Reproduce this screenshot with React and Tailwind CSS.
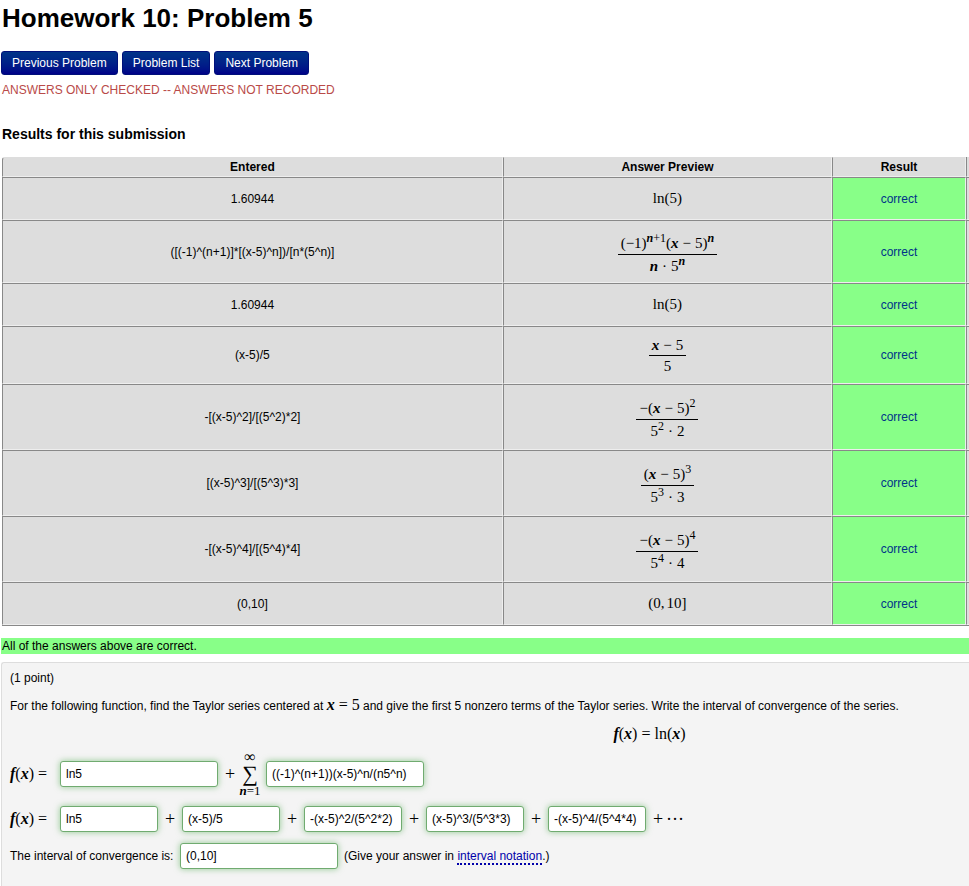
import React, { useState } from 'react';

const Tex = ({ children, className = 'text-[15px]' }) => (
  <span className={`font-['Liberation_Serif',serif] whitespace-nowrap ${className}`}>{children}</span>
);

const V = ({ children }) => <i className="font-semibold">{children}</i>;

// binary operator with the usual math spacing on both sides
const Op = ({ children }) => <span className="mx-1">{children}</span>;

const Sup = ({ children, className = '' }) => (
  <sup className={`-top-1.5 text-[12px] ${className}`}>{children}</sup>
);

const Frac = ({ num, den, className = '' }) => (
  <Tex className={`inline-flex flex-col items-center align-middle text-[15px] ${className}`}>
    <span className="border-b border-black px-[3px]">{num}</span>
    <span>{den}</span>
  </Tex>
);

const XMinus5 = () => (
  <>
    (<V>x</V>
    <Op>−</Op>5)
  </>
);

const results = [
  { entered: '1.60944', preview: <Tex>ln(5)</Tex>, height: 'h-[43px]' },
  {
    entered: '([(-1)^(n+1)]*[(x-5)^n])/[n*(5^n)]',
    preview: (
      <Frac
        className="leading-[22px] pt-1.5"
        num={
          <>
            (−1)
            <Sup>
              <V>n</V>+1
            </Sup>
            <XMinus5 />
            <Sup>
              <V>n</V>
            </Sup>
          </>
        }
        den={
          <>
            <V>n</V>
            <Op>·</Op>5
            <Sup>
              <V>n</V>
            </Sup>
          </>
        }
      />
    ),
    height: 'h-[63px]',
  },
  { entered: '1.60944', preview: <Tex>ln(5)</Tex>, height: 'h-[43px]' },
  {
    entered: '(x-5)/5',
    preview: (
      <Frac
        className="leading-5"
        num={
          <>
            <V>x</V>
            <Op>−</Op>5
          </>
        }
        den="5"
      />
    ),
    height: 'h-[58px]',
  },
  {
    entered: '-[(x-5)^2]/[(5^2)*2]',
    preview: (
      <Frac
        className="leading-[22px] pt-1"
        num={<>−<XMinus5 /><Sup>2</Sup></>}
        den={<>5<Sup>2</Sup><Op>·</Op>2</>}
      />
    ),
    height: 'h-[66px]',
  },
  {
    entered: '[(x-5)^3]/[(5^3)*3]',
    preview: (
      <Frac
        className="leading-[22px] pt-1"
        num={<><XMinus5 /><Sup>3</Sup></>}
        den={<>5<Sup>3</Sup><Op>·</Op>3</>}
      />
    ),
    height: 'h-[66px]',
  },
  {
    entered: '-[(x-5)^4]/[(5^4)*4]',
    preview: (
      <Frac
        className="leading-[22px] pt-1"
        num={<>−<XMinus5 /><Sup>4</Sup></>}
        den={<>5<Sup>4</Sup><Op>·</Op>4</>}
      />
    ),
    height: 'h-[66px]',
  },
  {
    entered: '(0,10]',
    preview: (
      <Tex>
        (0,<span className="ml-0.5">10]</span>
      </Tex>
    ),
    height: 'h-[43px]',
  },
];

const cell = 'border border-t-[#888] border-l-[#888] border-r-[#eee] border-b-[#eee] p-0 text-center align-middle';
const headCell = 'border border-t-[#ddd] border-l-[#888] border-r-[#eee] border-b-[#eee] p-0 text-center font-bold';

const NavButton = ({ children }) => (
  <button
    type="button"
    className="h-6 px-2.5 rounded-[3px] border border-[#00107a] bg-linear-to-b from-[#003388] to-[#000088] text-white leading-4 cursor-pointer"
  >
    {children}
  </button>
);

const AnswerBox = ({ label, initial, className = 'w-[98px]' }) => {
  const [value, setValue] = useState(initial);

  return (
    <input
      type="text"
      aria-label={label}
      value={value}
      onChange={(e) => setValue(e.target.value)}
      className={`h-[26px] px-[5px] rounded-[3px] border border-[#70ab70] bg-white text-black outline-none shadow-[0_0_6px_rgba(80,170,80,0.6)] ${className}`}
    />
  );
};

const FofX = () => (
  <Tex className="text-[16px]">
    <V>f</V>(<V>x</V>)<Op>=</Op>
  </Tex>
);

const Plus = () => <Tex className="w-6 text-center text-[18px]">+</Tex>;

const terms = ['ln5', '(x-5)/5', '-(x-5)^2/(5^2*2)', '(x-5)^3/(5^3*3)', '-(x-5)^4/(5^4*4)'];

export default function App() {
  return (
    <main className="min-h-screen overflow-x-hidden bg-white pl-px font-['Liberation_Sans',Arial,sans-serif] text-xs leading-4 text-black">
      <h1 className="pl-px pt-0.5 text-[26px] leading-8 font-bold">Homework 10: Problem 5</h1>

      <nav className="mt-[17px] flex gap-1">
        <NavButton>Previous Problem</NavButton>
        <NavButton>Problem List</NavButton>
        <NavButton>Next Problem</NavButton>
      </nav>

      <p className="mt-[7px] pl-px text-[#b94a48]">ANSWERS ONLY CHECKED -- ANSWERS NOT RECORDED</p>

      <h3 className="mt-7 pl-px text-sm leading-4 font-bold">Results for this submission</h3>

      <div className="mt-[15px] pl-px">
        <table className="w-full table-fixed border-separate border-spacing-0 rounded-tl-[3px] border-b border-[#888] bg-[#ddd]">
          <colgroup>
            <col className="w-[51.8%]" />
            <col />
            <col className="w-[134px]" />
            <col className="w-[3px]" />
          </colgroup>
          <thead>
            <tr className="h-5">
              <th className={`${headCell} rounded-tl-[3px]`}>Entered</th>
              <th className={headCell}>Answer Preview</th>
              <th className={headCell}>Result</th>
              <td className="border-l border-b border-l-[#888] border-b-[#eee] p-0" />
            </tr>
          </thead>
          <tbody>
            {results.map((row, i) => (
              <tr key={i} className={row.height}>
                <td className={cell}>{row.entered}</td>
                <td className={cell}>{row.preview}</td>
                <td className={`${cell} bg-[#88ff88] text-[#003388]`}>correct</td>
                <td className="border-y border-l border-t-[#888] border-l-[#888] border-b-[#eee] p-0" />
              </tr>
            ))}
          </tbody>
        </table>
      </div>

      <p className="mt-3 bg-[#88ff88] pl-px">All of the answers above are correct.</p>

      <section className="mt-2 min-h-[224px] rounded-tl-[3px] border-t border-l border-[#ddd] bg-[#f4f4f4] pl-2 pt-[7px]">
        <p>(1 point)</p>

        <p className="mt-[11px]">
          For the following function, find the Taylor series centered at{' '}
          <Tex className="text-[16px]">
            <V>x</V>
            <Op>=</Op>5
          </Tex>{' '}
          and give the first 5 nonzero terms of the Taylor series. Write the interval of convergence of the series.
        </p>

        <p className="mt-3 pl-80 text-center">
          <FofX />
          <Tex className="text-[16px]">
            ln(<V>x</V>)
          </Tex>
        </p>

        <div className="mt-2 flex h-[46px] items-center">
          <span className="w-[50px]">
            <FofX />
          </span>
          <AnswerBox label="Constant term of the series" initial="ln5" className="w-[158px]" />
          <Plus />
          <Tex className="-ml-1 mr-1 flex w-6 flex-col items-center">
            <span className="text-[16px] leading-3">∞</span>
            <span className="text-[22px] leading-[22px]">∑</span>
            <span className="text-[13px] leading-3">
              <V>n</V>=1
            </span>
          </Tex>
          <AnswerBox label="General term of the series" initial="((-1)^(n+1))(x-5)^n/(n5^n)" className="w-[158px]" />
        </div>

        <div className="mt-[9px] flex items-center">
          <span className="w-[50px]">
            <FofX />
          </span>
          {terms.map((term, i) => (
            <React.Fragment key={term}>
              {i > 0 && <Plus />}
              <AnswerBox label={`Term ${i + 1}`} initial={term} />
            </React.Fragment>
          ))}
          <Plus />
          <Tex className="-ml-1 text-[18px]">···</Tex>
        </div>

        <div className="mt-[11px] flex items-center">
          <span className="w-[170px]">The interval of convergence is:</span>
          <AnswerBox label="The interval of convergence" initial="(0,10]" className="w-[158px]" />
          <span className="ml-1.5">
            (Give your answer in{' '}
            <a href="#interval-notation" className="border-b-2 border-dotted border-[#0000aa] text-[#0000aa]">
              interval notation
            </a>
            .)
          </span>
        </div>
      </section>
    </main>
  );
}
